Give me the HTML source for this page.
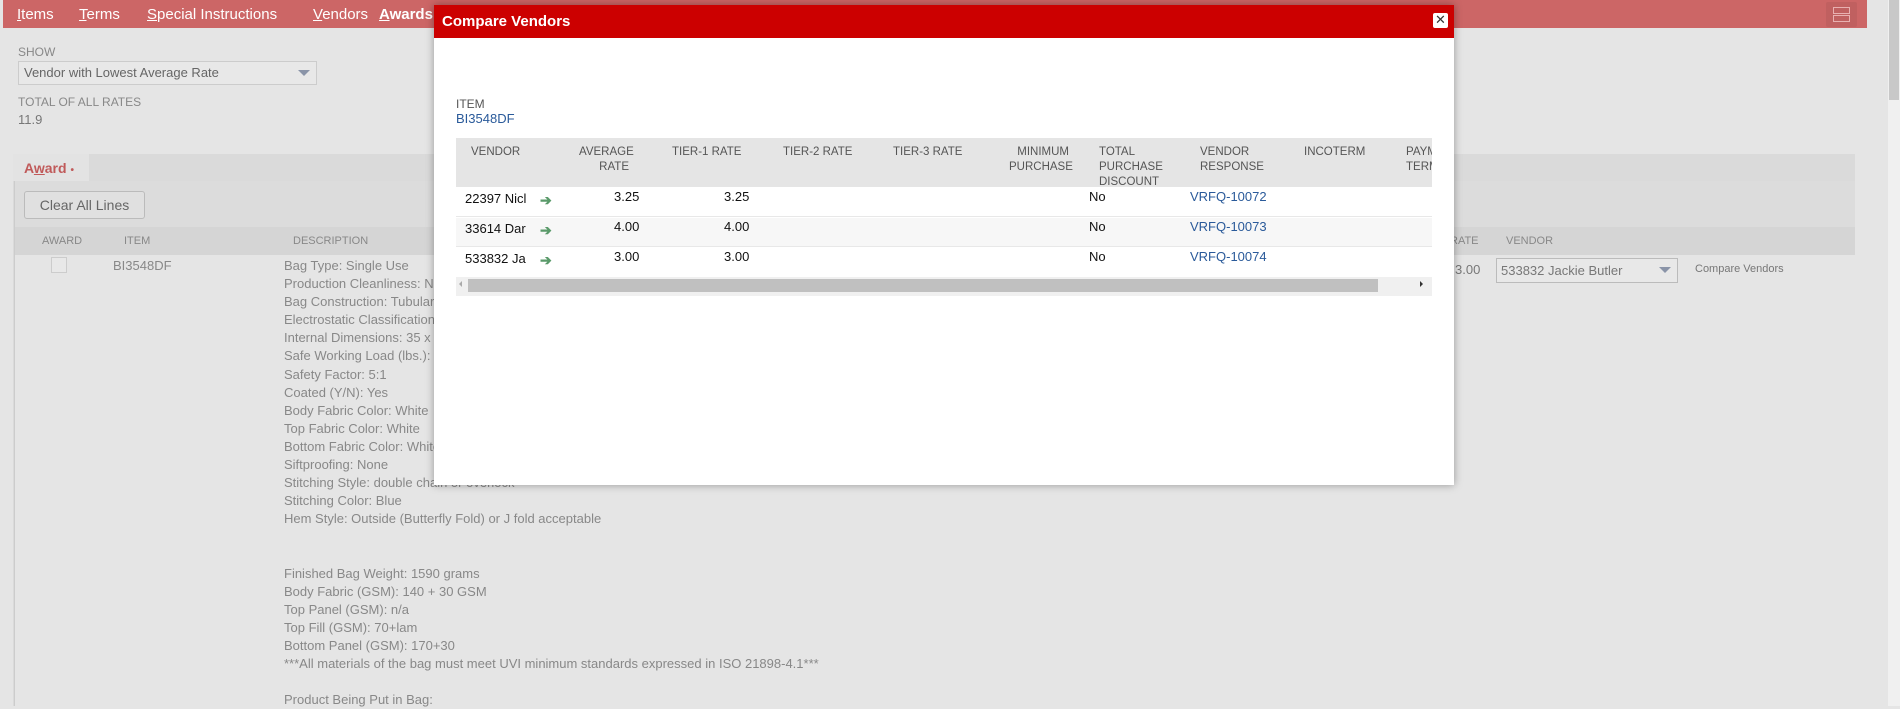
<!DOCTYPE html>
<html><head><meta charset="utf-8"><style>
*{margin:0;padding:0;box-sizing:border-box}
body{width:1900px;height:706px;overflow:hidden;background:#e5e5e5;font-family:"Liberation Sans",sans-serif;position:relative;color:#666}
.a{position:absolute;white-space:nowrap}
.tab{font-size:15px;color:#fff;top:6px}
.tab u{text-decoration:underline}
.lbl{font-size:12px;color:#888}
.desc{font-size:13px;color:#888;line-height:18.1px}
.m{position:absolute;left:434px;top:5px;width:1020px;height:480px;background:#fff;box-shadow:0 0 8px rgba(0,0,0,.35)}
.th{font-size:11.5px;color:#555;line-height:15px}
.td{font-size:13px;color:#111}
.ar{color:#5a9a6a;font-size:14px;font-weight:bold}
</style></head><body>
<div class="a" style="left:3px;top:0;width:1864px;height:28px;background:#cc6666"></div>
<div class="a tab" style="left:17px"><u>I</u>tems</div>
<div class="a tab" style="left:79px"><u>T</u>erms</div>
<div class="a tab" style="left:147px"><u>S</u>pecial Instructions</div>
<div class="a tab" style="left:313px"><u>V</u>endors</div>
<div class="a tab" style="left:379px;font-weight:bold"><u>A</u>wards</div>
<div class="a" style="left:1826px;top:2px;width:31px;height:25px;background:#c06060;border-radius:2px"></div>
<div class="a" style="left:1833px;top:7px;width:17px;height:7px;border:1px solid #e8b0b0"></div>
<div class="a" style="left:1833px;top:15px;width:17px;height:7px;border:1px solid #e8b0b0"></div>
<div class="a" style="left:1888px;top:0;width:12px;height:706px;background:#f0f0f0"></div>
<div class="a" style="left:1889px;top:0;width:10px;height:100px;background:#c8c8c8"></div>

<div class="a lbl" style="left:18px;top:45px">SHOW</div>
<div class="a" style="left:18px;top:61px;width:299px;height:24px;border:1px solid #ccc;background:#e8e8e8;font-size:13px;color:#666;padding:3px 5px">Vendor with Lowest Average Rate</div>
<div class="a" style="left:298px;top:70px;border-left:6px solid transparent;border-right:6px solid transparent;border-top:6px solid #8a94a8"></div>
<div class="a lbl" style="left:18px;top:95px">TOTAL OF ALL RATES</div>
<div class="a" style="left:18px;top:112px;font-size:13px;color:#777">11.9</div>

<div class="a" style="left:13px;top:154px;width:1842px;height:552px;background:#dadada"></div>
<div class="a" style="left:13px;top:154px;width:76px;height:27px;background:#e3e3e3"></div>
<div class="a" style="left:24px;top:160px;font-size:14px;font-weight:bold;color:#c05a5a">A<u>w</u>ard <span style="font-size:10px">•</span></div>
<div class="a" style="left:14px;top:181px;width:1841px;height:525px;background:#dcdcdc;border-left:1px solid #ccc"></div>
<div class="a" style="left:24px;top:191px;width:121px;height:28px;border:1px solid #bbb;border-radius:3px;background:#e0e0e0;font-size:14px;color:#666;text-align:center;line-height:26px">Clear All Lines</div>
<div class="a" style="left:15px;top:227px;width:1840px;height:28px;background:#d5d5d5"></div>
<div class="a" style="left:15px;top:255px;width:1840px;height:451px;background:#e5e5e5"></div>
<div class="a lbl" style="left:42px;top:235px;font-size:11px">AWARD</div>
<div class="a lbl" style="left:124px;top:235px;font-size:11px">ITEM</div>
<div class="a lbl" style="left:293px;top:235px;font-size:11px">DESCRIPTION</div>
<div class="a lbl" style="left:1450px;top:235px;font-size:11px">RATE</div>
<div class="a lbl" style="left:1506px;top:235px;font-size:11px">VENDOR</div>
<div class="a" style="left:51px;top:257px;width:16px;height:16px;border:1px solid #ccc;background:#e8e8e8"></div>
<div class="a" style="left:113px;top:258px;font-size:13px;color:#888">BI3548DF</div>
<div class="a desc" style="left:284px;top:257px">Bag Type: Single Use<br>Production Cleanliness: N<br>Bag Construction: Tubular<br>Electrostatic Classification<br>Internal Dimensions: 35 x<br>Safe Working Load (lbs.):<br>Safety Factor: 5:1<br>Coated (Y/N): Yes<br>Body Fabric Color: White<br>Top Fabric Color: White<br>Bottom Fabric Color: White<br>Siftproofing: None<br>Stitching Style: double chain or overlock<br>Stitching Color: Blue<br>Hem Style: Outside (Butterfly Fold) or J fold acceptable<br><br><br>Finished Bag Weight: 1590 grams<br>Body Fabric (GSM): 140 + 30 GSM<br>Top Panel (GSM): n/a<br>Top Fill (GSM): 70+lam<br>Bottom Panel (GSM): 170+30<br>***All materials of the bag must meet UVI minimum standards expressed in ISO 21898-4.1***<br><br>Product Being Put in Bag:</div>
<div class="a" style="left:1455px;top:262px;font-size:13px;color:#777">3.00</div>
<div class="a" style="left:1496px;top:258px;width:182px;height:25px;border:1px solid #bbb;background:#e8e8e8;font-size:13px;color:#777;padding:4px 4px">533832 Jackie Butler</div>
<div class="a" style="left:1659px;top:267px;border-left:6px solid transparent;border-right:6px solid transparent;border-top:6px solid #8a94a8"></div>
<div class="a" style="left:1695px;top:263px;font-size:11px;color:#777">Compare Vendors</div>

<div class="m">
<div class="a" style="left:0;top:0;width:1020px;height:33px;background:#cc0000"></div>
<div class="a" style="left:8px;top:8px;font-size:15px;font-weight:bold;color:#fff">Compare Vendors</div>
<div class="a" style="left:999px;top:8px;width:15px;height:15px;background:#fff;border-radius:2px;color:#333;font-size:13px;line-height:14px;text-align:center">✕</div>
<div class="a" style="left:22px;top:92px;font-size:12px;color:#555">ITEM</div>
<div class="a" style="left:22px;top:106px;font-size:13px;color:#2a5a9a">BI3548DF</div>
<div class="a" style="left:22px;top:133px;width:976px;height:49px;background:#e5e5e5"></div>
<div class="a th" style="left:37px;top:140px">VENDOR</div>
<div class="a th" style="left:145px;top:140px;width:50px;text-align:right">AVERAGE<br>RATE</div>
<div class="a th" style="left:238px;top:140px">TIER-1 RATE</div>
<div class="a th" style="left:349px;top:140px">TIER-2 RATE</div>
<div class="a th" style="left:459px;top:140px">TIER-3 RATE</div>
<div class="a th" style="left:575px;top:140px;width:60px;text-align:right">MINIMUM<br>PURCHASE</div>
<div class="a th" style="left:665px;top:140px">TOTAL<br>PURCHASE<br>DISCOUNT</div>
<div class="a th" style="left:766px;top:140px">VENDOR<br>RESPONSE</div>
<div class="a th" style="left:870px;top:140px">INCOTERM</div>
<div class="a th" style="left:972px;top:140px;width:26px;overflow:hidden">PAYMENT<br>TERMS</div>
<div class="a" style="left:22px;top:183px;width:976px;height:29px;background:#fff;border-bottom:1px solid #e8e8e8"></div>
<div class="a" style="left:22px;top:213px;width:976px;height:29px;background:#f7f7f7;border-bottom:1px solid #e8e8e8"></div>
<div class="a" style="left:22px;top:243px;width:976px;height:29px;background:#fff"></div>
<div class="a" style="left:22px;top:272px;width:976px;height:19px;background:#f0f0f0"></div>
<div class="a" style="left:34px;top:274px;width:910px;height:13px;background:#c0c0c0"></div>
<div class="a" style="left:25px;top:276px;border-top:3px solid transparent;border-bottom:3px solid transparent;border-right:3px solid #aaa"></div>
<div class="a" style="left:986px;top:276px;border-top:3px solid transparent;border-bottom:3px solid transparent;border-left:3px solid #333"></div>

<div class="a td" style="left:31px;top:186px">22397 Nicl</div><div class="a ar" style="left:106px;top:187px">➔</div>
<div class="a td" style="left:180px;top:184px">3.25</div><div class="a td" style="left:290px;top:184px">3.25</div>
<div class="a td" style="left:655px;top:184px">No</div><div class="a td" style="left:756px;top:184px;color:#2a5a9a">VRFQ-10072</div>
<div class="a td" style="left:31px;top:216px">33614 Dar</div><div class="a ar" style="left:106px;top:217px">➔</div>
<div class="a td" style="left:180px;top:214px">4.00</div><div class="a td" style="left:290px;top:214px">4.00</div>
<div class="a td" style="left:655px;top:214px">No</div><div class="a td" style="left:756px;top:214px;color:#2a5a9a">VRFQ-10073</div>
<div class="a td" style="left:31px;top:246px">533832 Ja</div><div class="a ar" style="left:106px;top:247px">➔</div>
<div class="a td" style="left:180px;top:244px">3.00</div><div class="a td" style="left:290px;top:244px">3.00</div>
<div class="a td" style="left:655px;top:244px">No</div><div class="a td" style="left:756px;top:244px;color:#2a5a9a">VRFQ-10074</div>
</div>
</body></html>
